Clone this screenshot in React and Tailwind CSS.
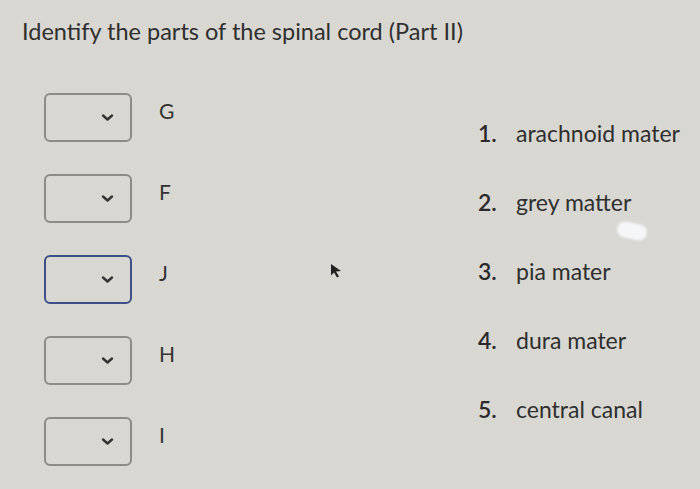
import React from 'react'

const rows = ['G', 'F', 'J', 'H', 'I']
const options = ['arachnoid mater', 'grey matter', 'pia mater', 'dura mater', 'central canal']

function Chevron() {
  return (
    <svg width="13" height="9" viewBox="0 0 13 9" fill="none" stroke="#333" strokeWidth="2.4" strokeLinecap="round" strokeLinejoin="round">
      <path d="M2 2.5l4.5 4 4.5-4" />
    </svg>
  )
}

export default function App() {
  return (
    <div className="relative w-[700px] h-[489px] overflow-hidden bg-[#d9d7d2] text-[#2f2f2f]" style={{ fontFamily: 'Lato, "Open Sans", sans-serif' }}>
      <h1 className="pl-[22px] pt-[16px] text-[23.5px] leading-[30px] font-normal">Identify the parts of the spinal cord (Part II)</h1>

      <div className="flex mt-[47px]">
        <div className="flex flex-col gap-[32px] pl-[44px] w-[440px]">
          {rows.map((r, i) => (
            <div key={r} className="flex items-center">
              <div className={`w-[88px] h-[49px] rounded-[6px] border-2 flex items-center pl-[55px] ${i === 2 ? 'border-[#3d4f86]' : 'border-[#8d8b87]'}`}>
                <Chevron />
              </div>
              <span className="ml-[27px] text-[21px] leading-none text-[#333] -mt-[14px]">{r}</span>
            </div>
          ))}
        </div>

        <div className="flex flex-col gap-[41px] pl-[38px] pt-[26px]">
          {options.map((o, i) => (
            <div key={o} className="flex items-baseline text-[23px] leading-[28px]">
              <span className="w-[38px] font-semibold text-[#2a2a2a]">{i + 1}.</span>
              <span>{o}</span>
            </div>
          ))}
        </div>
      </div>

      <div className="absolute left-[617px] top-[223px] w-[30px] h-[16px] rounded-full bg-[#f4f6f8] rotate-[12deg] blur-[1px]" />
      <svg className="absolute left-[328px] top-[262px]" width="16" height="16" viewBox="0 0 16 16">
        <path d="M3 2l10 7-5 .5 3 5-2 1-3-5-3 3z" fill="#222" />
      </svg>
    </div>
  )
}
